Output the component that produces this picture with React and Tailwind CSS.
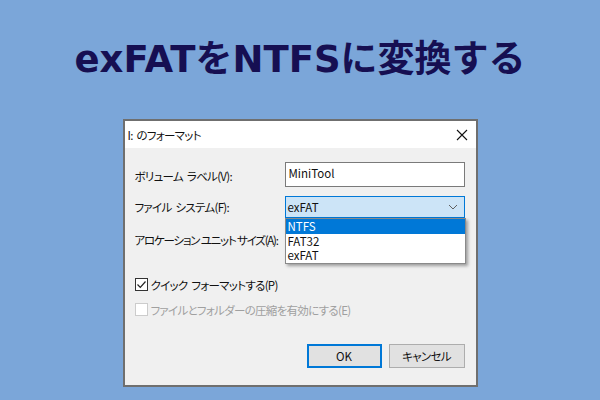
const uiFont = { fontFamily: '"Noto Sans CJK JP", "Noto Sans", sans-serif', fontFeatureSettings: '"palt"' };
const headFont = { fontFamily: '"DejaVu Sans", "Noto Sans CJK JP", sans-serif' };

const Chevron = () => (
  <svg width="10" height="6" viewBox="0 0 10 6" fill="none">
    <path d="M1 1l4 4 4-4" stroke="#606060" strokeWidth="1" />
  </svg>
);

const CloseX = () => (
  <svg width="12" height="12" viewBox="0 0 12 12" fill="none">
    <path d="M1 1l10 10M11 1L1 11" stroke="#111" strokeWidth="1.1" />
  </svg>
);

const Check = () => (
  <svg width="11" height="11" viewBox="0 0 11 11" fill="none">
    <path d="M1.5 5.5l2.8 2.8L9.5 2.5" stroke="#222" strokeWidth="1.2" />
  </svg>
);

const App = () => {
  return (
    <div className="w-[600px] h-[400px] bg-[#7ba6d9] flex flex-col items-center overflow-hidden">
      <h1 className="pt-[41px] text-[37px] leading-[37px] font-bold text-[#160f52] whitespace-nowrap" style={headFont}>
        exFATをNTFSに変換する
      </h1>

      <div className="mt-[41px] w-[355px] h-[268px] border-2 border-[#6f6f6f] bg-[#f0f0f0] flex flex-col text-[11.5px] leading-[16px] tracking-[-0.7px] [word-spacing:2px] text-[#111] whitespace-nowrap" style={uiFont}>
        <div className="h-[27px] bg-white flex items-center justify-between pl-[3px] pr-[8px]">
          <span>I: のフォーマット</span>
          <CloseX />
        </div>

        <div className="relative flex flex-col pl-[10px] pr-[10px] pt-[14px]">
          <div className="flex items-center h-[25px]">
            <span className="w-[150px] pt-[2px]">ボリューム ラベル(V):</span>
            <div className="w-[180px] h-[25px] bg-white border border-[#7a7a7a] pl-[3px] pt-[2px] tracking-normal">MiniTool</div>
          </div>

          <div className="flex items-center mt-[9px] h-[22px]">
            <span className="w-[150px]">ファイル システム(F):</span>
            <div className="w-[180px] h-[22px] bg-[#cce4f7] border border-[#0078d7] pl-[2px] pr-[6px] flex items-center justify-between tracking-normal">
              <span>exFAT</span>
              <Chevron />
            </div>
          </div>

          <div className="flex items-center mt-[11px] h-[22px]">
            <span className="w-[150px] tracking-[-1.2px] [word-spacing:0px]">アロケーション ユニット サイズ(A):</span>
          </div>

          <div className="absolute left-[160px] top-[70px] w-[181px] bg-white border border-[#8a8a8a] shadow-[2px_2px_3px_rgba(0,0,0,0.35)] flex flex-col leading-[14.5px] tracking-normal">
            <div className="bg-[#0078d7] text-white pl-[2px]">NTFS</div>
            <div className="pl-[2px]">FAT32</div>
            <div className="pl-[2px]">exFAT</div>
          </div>

          <div className="flex items-center gap-[3px] mt-[27px] h-[13px]">
            <div className="w-[13px] h-[13px] border border-[#333] bg-white flex items-center justify-center">
              <Check />
            </div>
            <span>クイック フォーマットする(P)</span>
          </div>

          <div className="flex items-center gap-[3px] mt-[12px] h-[13px] text-[#a0a0a0]">
            <div className="w-[13px] h-[13px] border border-[#cccccc] bg-white" />
            <span>ファイルとフォルダーの圧縮を有効にする(E)</span>
          </div>

          <div className="flex justify-end gap-[7px] mt-[28px] pr-[1px]">
            <div className="w-[75px] h-[24px] bg-[#e1e1e1] border-2 border-[#0078d7] flex items-center justify-center tracking-normal">OK</div>
            <div className="w-[76px] h-[24px] bg-[#e1e1e1] border border-[#adadad] flex items-center justify-center">キャンセル</div>
          </div>
        </div>
      </div>
    </div>
  );
};

export default App;
